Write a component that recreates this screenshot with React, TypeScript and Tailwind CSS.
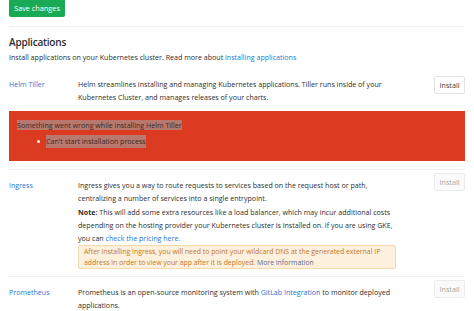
import React from "react";

const font = { fontFamily: '"Open Sans", "Noto Sans", sans-serif' };

function InstallBtn({ disabled }: { disabled?: boolean }) {
  return (
    <button
      className={
        disabled
          ? "h-[18px] w-[31px] rounded-[2px] border border-[#ececec] bg-[#fafafa] text-[7.2px] text-[#a8a8a8]"
          : "h-[18px] w-[31px] rounded-[2px] border border-[#e3e3e3] bg-white text-[7.2px] text-[#3a3a3a]"
      }
    >
      Install
    </button>
  );
}

export default function App() {
  return (
    <div
      className="w-[474px] h-[311px] overflow-hidden bg-white text-[#2e2e2e] text-[7.1px] leading-[13px]"
      style={font}
    >
      <div className="px-[9px]">
        <div className="pb-[9px] border-b border-[#f0f0f0]">
          <button className="h-[18px] w-[56px] rounded-[2px] bg-[#1aaa55] text-white text-[7.3px] -mt-[1px]">
            Save changes
          </button>
        </div>
        <div className="pt-[7px]">
          <h2 className="text-[10px] leading-[16px] font-semibold tracking-[-0.2px] text-[#2e2e2e]">Applications</h2>
          <p className="mt-[1px]">
            Install applications on your Kubernetes cluster. Read more about{" "}
            <span className="text-[#1f78d1]">installing applications</span>
          </p>
        </div>

        {/* Helm Tiller */}
        <div className="mt-[12px] flex items-start">
          <div className="w-[69px] text-[#1f78d1] pt-[2px]">Helm Tiller</div>
          <div className="w-[322px] pt-[2px]">
            Helm streamlines installing and managing Kubernetes applications. Tiller runs inside of your
            Kubernetes Cluster, and manages releases of your charts.
          </div>
          <div className="flex-1 flex justify-end">
            <InstallBtn />
          </div>
        </div>

        <div className="mt-[7px] h-[50px] bg-[#db3b21] pl-[8px] pt-[8px]">
          <div>
            <span className="bg-[#b9786d] text-[#3b2a27]">Something went wrong while installing Helm Tiller</span>
          </div>
          <div className="flex items-center mt-[3px] pl-[20px]">
            <span className="w-[3px] h-[3px] rounded-full bg-white mr-[6px]" />
            <span className="bg-[#b9786d] text-[#3b2a27]">Can't start installation process</span>
          </div>
        </div>

        <div className="mt-[8px] border-t border-[#f0f0f0]" />

        {/* Ingress */}
        <div className="mt-[9px] flex items-start">
          <div className="w-[69px] text-[#1f78d1]">Ingress</div>
          <div className="w-[322px]">
            <p>
              Ingress gives you a way to route requests to services based on the request host or path,
              centralizing a number of services into a single entrypoint.
            </p>
            <p className="mt-[1px]">
              <span className="font-bold">Note:</span> This will add some extra resources like a load balancer, which may incur additional costs
              depending on the hosting provider your Kubernetes cluster is installed on. If you are using GKE,
              you can <span className="text-[#1f78d1]">check the pricing here.</span>
            </p>
            <div className="mt-[0px] w-[318px] rounded-[2px] border border-[#f6d9ad] bg-[#fdf1de] px-[5px] text-[#c0762c] text-[6.9px] leading-[11px]">
              After installing Ingress, you will need to point your wildcard DNS at the generated external IP
              address in order to view your app after it is deployed. <span className="text-[#5a6a8a]">More information</span>
            </div>
          </div>
          <div className="flex-1 flex justify-end -mt-[6px]">
            <InstallBtn disabled />
          </div>
        </div>

        <div className="mt-[7px] border-t border-[#f0f0f0]" />

        {/* Prometheus */}
        <div className="mt-[9px] flex items-start">
          <div className="w-[69px] text-[#1f78d1]">Prometheus</div>
          <div className="w-[322px]">
            Prometheus is an open-source monitoring system with{" "}
            <span className="text-[#1f78d1]">GitLab Integration</span> to monitor deployed applications.
          </div>
          <div className="flex-1 flex justify-end -mt-[6px]">
            <InstallBtn disabled />
          </div>
        </div>
      </div>
    </div>
  );
}
